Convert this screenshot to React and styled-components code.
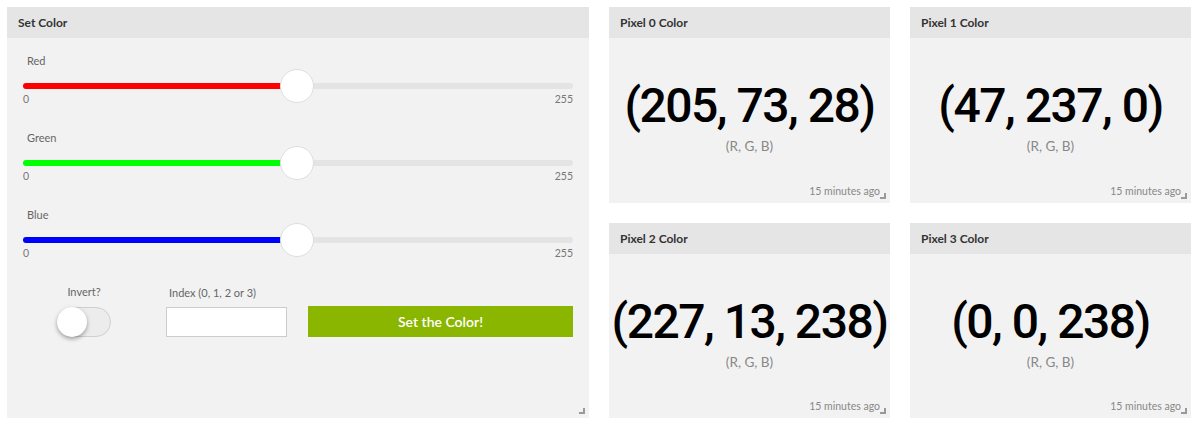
import React from 'react';
import styled, { createGlobalStyle } from 'styled-components';

const GlobalStyle = createGlobalStyle`
    html, body {
        margin: 0;
        padding: 0;
        background: #fff;
        font-family: Lato, "Noto Sans", sans-serif;
    }
`;

const Board = styled.div`
    display: grid;
    grid-template-columns: 582px 281px 281px;
    grid-template-rows: 196px 195px;
    column-gap: 20px;
    row-gap: 20px;
    padding: 7px;
    width: 1200px;
    height: 426px;
    box-sizing: border-box;
`;

const Panel = styled.div`
    position: relative;
    display: flex;
    flex-direction: column;
    background: #f2f2f2;
    grid-row: ${p => (p.$tall ? '1 / span 2' : 'auto')};
`;

const Header = styled.div`
    height: 31px;
    line-height: 31px;
    padding-left: 11px;
    background: #e5e5e5;
    color: #333;
    font-size: 12px;
    font-weight: 700;
    flex-shrink: 0;
`;

const Resize = styled.span`
    position: absolute;
    right: 4px;
    bottom: 4px;
    width: 4px;
    height: 4px;
    border-right: 2px solid #999;
    border-bottom: 2px solid #999;
`;

const FormBody = styled.div`
    padding: 16px 16px 0 16px;
    display: flex;
    flex-direction: column;
`;

const SliderGroup = styled.div`
    display: flex;
    flex-direction: column;
    margin-bottom: 26px;
`;

const SliderLabel = styled.div`
    font-size: 11px;
    line-height: 14px;
    color: #666;
    padding-left: 4px;
    margin-bottom: 15px;
`;

const Track = styled.div`
    position: relative;
    height: 6px;
    border-radius: 3px;
    background: #e4e4e4;
`;

const Fill = styled.div`
    height: 100%;
    border-radius: 3px 0 0 3px;
    background: ${p => p.$color};
`;

const Thumb = styled.div`
    position: absolute;
    top: 50%;
    width: 34px;
    height: 34px;
    margin-left: -17px;
    margin-top: -17px;
    border-radius: 50%;
    background: #fff;
    border: 1px solid #dedede;
    box-sizing: border-box;
`;

const Range = styled.div`
    display: flex;
    justify-content: space-between;
    margin-top: 4px;
    font-size: 10.5px;
    line-height: 12px;
    color: #777;
`;

const Controls = styled.div`
    display: grid;
    grid-template-columns: 122px 121px 1fr;
    column-gap: 21px;
    align-items: end;
`;

const Field = styled.div`
    display: flex;
    flex-direction: column;
    align-items: ${p => (p.$center ? 'center' : 'flex-start')};
`;

const FieldLabel = styled.div`
    font-size: 11px;
    line-height: 14px;
    color: #666;
    margin-bottom: ${p => p.$gap || 8}px;
    padding-left: ${p => (p.$center ? 0 : 3)}px;
`;

const Toggle = styled.div`
    position: relative;
    width: 54px;
    height: 30px;
    border-radius: 15px;
    background: #ececec;
    border: 1px solid #cfcfcf;
    box-sizing: border-box;
`;

const Knob = styled.div`
    position: absolute;
    left: -1px;
    top: -1px;
    width: 30px;
    height: 30px;
    border-radius: 50%;
    background: #fff;
    box-shadow: 0 2px 4px rgba(0, 0, 0, 0.35);
`;

const IndexInput = styled.input`
    width: 121px;
    height: 30px;
    box-sizing: border-box;
    border: 1px solid #cccccc;
    background: #fff;
    outline: none;
    padding: 0 6px;
`;

const SetButton = styled.button`
    height: 31px;
    width: 100%;
    border: none;
    background: #8ab600;
    color: #fff;
    font-family: Lato, "Noto Sans", sans-serif;
    font-size: 14px;
    font-weight: 600;
    cursor: pointer;
`;

const TileBody = styled.div`
    flex: 1;
    display: flex;
    flex-direction: column;
    align-items: center;
    padding: 44px 10px 6px 10px;
`;

const BigValue = styled.div`
    font-family: Roboto, "Liberation Sans", sans-serif;
    font-weight: 500;
    font-size: 48px;
    line-height: 48px;
    letter-spacing: -1.5px;
    color: #000;
    white-space: nowrap;
`;

const Caption = styled.div`
    margin-top: 8px;
    font-size: 13.5px;
    line-height: 16px;
    color: #888;
`;

const Updated = styled.div`
    margin-top: auto;
    align-self: flex-end;
    font-size: 10.5px;
    line-height: 12px;
    color: #888;
`;

const sliders = [
    { name: 'Red', color: '#ff0000', value: 127 },
    { name: 'Green', color: '#00ff00', value: 127 },
    { name: 'Blue', color: '#0000ff', value: 127 },
];

const pixels = [
    '(205, 73, 28)',
    '(47, 237, 0)',
    '(227, 13, 238)',
    '(0, 0, 238)',
];

const Slider = ({ name, color, value }) => {
    const pct = (value / 255) * 100;
    return (
        <SliderGroup>
            <SliderLabel>{name}</SliderLabel>
            <Track>
                <Fill $color={color} style={{ width: pct + '%' }} />
                <Thumb style={{ left: pct + '%' }} />
            </Track>
            <Range>
                <span>0</span>
                <span>255</span>
            </Range>
        </SliderGroup>
    );
};

const PixelTile = ({ index, value }) => (
    <Panel>
        <Header>Pixel {index} Color</Header>
        <TileBody>
            <BigValue>{value}</BigValue>
            <Caption>(R, G, B)</Caption>
            <Updated>15 minutes ago</Updated>
        </TileBody>
        <Resize />
    </Panel>
);

const App = () => {
    return (
        <>
            <GlobalStyle />
            <Board>
                <Panel $tall>
                    <Header>Set Color</Header>
                    <FormBody>
                        {sliders.map(s => (
                            <Slider key={s.name} {...s} />
                        ))}
                        <Controls>
                            <Field $center>
                                <FieldLabel $center $gap={8}>Invert?</FieldLabel>
                                <Toggle>
                                    <Knob />
                                </Toggle>
                            </Field>
                            <Field>
                                <FieldLabel $gap={7}>Index (0, 1, 2 or 3)</FieldLabel>
                                <IndexInput />
                            </Field>
                            <Field>
                                <SetButton>Set the Color!</SetButton>
                            </Field>
                        </Controls>
                    </FormBody>
                    <Resize />
                </Panel>
                {pixels.map((v, i) => (
                    <PixelTile key={i} index={i} value={v} />
                ))}
            </Board>
        </>
    );
};

export default App;
